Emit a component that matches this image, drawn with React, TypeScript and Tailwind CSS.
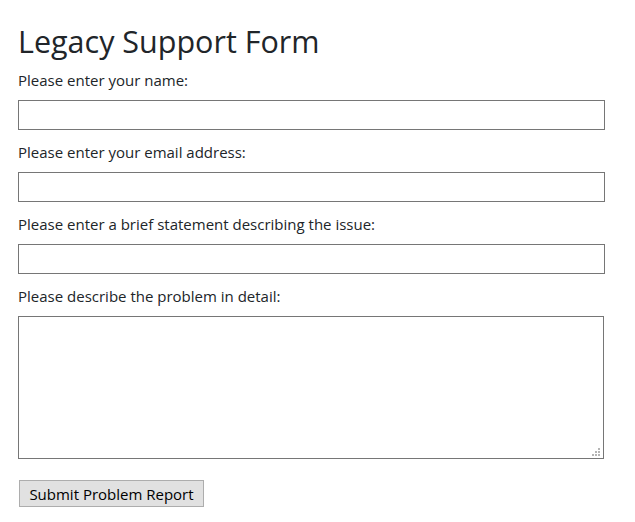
import React from "react";

const FIELDS = [
  { id: "name", label: "Please enter your name:" },
  { id: "email", label: "Please enter your email address:" },
  { id: "summary", label: "Please enter a brief statement describing the issue:" },
];

function ResizeGrip() {
  // little dotted triangle that Edge/Chrome draws in the textarea corner
  return (
    <svg className="pointer-events-none absolute right-[4px] bottom-[3px]" width="8" height="8" viewBox="0 0 8 8">
      <rect x="6" y="0" width="2" height="2" fill="#b5b5b5" />
      <rect x="3" y="3" width="2" height="2" fill="#b5b5b5" />
      <rect x="6" y="3" width="2" height="2" fill="#b5b5b5" />
      <rect x="0" y="6" width="2" height="2" fill="#b5b5b5" />
      <rect x="3" y="6" width="2" height="2" fill="#b5b5b5" />
      <rect x="6" y="6" width="2" height="2" fill="#b5b5b5" />
    </svg>
  );
}

export default function App() {
  return (
    <div
      className="min-h-screen bg-white px-[18px] pt-[22px] text-[#212529]"
      style={{ fontFamily: '"Open Sans", "Noto Sans", sans-serif' }}
    >
      <h1 className="mb-[10px] text-[30.5px] leading-[38px] font-normal">Legacy Support Form</h1>

      <form onSubmit={(e) => e.preventDefault()}>
        {FIELDS.map((field) => (
          <div key={field.id} className="mb-[12px]">
            <label htmlFor={field.id} className="mb-[10px] block text-[15px] leading-[20px]">
              {field.label}
            </label>
            <input
              id={field.id}
              type="text"
              className="block h-[30px] w-[587px] border border-[#767676] bg-white px-1 outline-none"
            />
          </div>
        ))}

        <div className="mb-[21px]">
          <label htmlFor="detail" className="mb-[10px] block text-[15px] leading-[20px]">
            Please describe the problem in detail:
          </label>
          <div className="relative w-[586px]">
            <textarea
              id="detail"
              className="block h-[143px] w-full resize-none border border-[#767676] bg-white px-1 outline-none"
            />
            <ResizeGrip />
          </div>
        </div>

        <button
          type="submit"
          className="ml-px h-[27px] w-[185px] border border-[#adadad] bg-[#e1e1e1] text-[15px] leading-[20px] text-black"
        >
          Submit Problem Report
        </button>
      </form>
    </div>
  );
}
